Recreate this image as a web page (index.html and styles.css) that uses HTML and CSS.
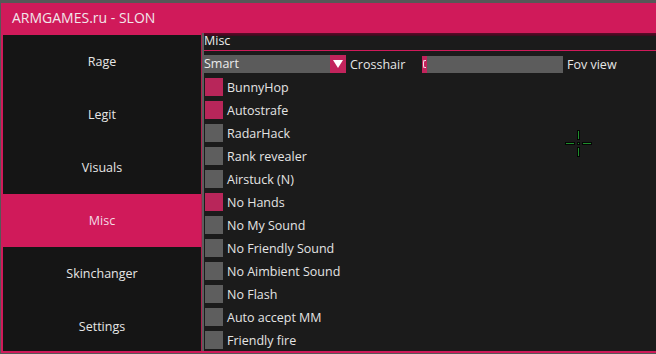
FILE: index.html
```html
<!DOCTYPE html>
<html>
<head>
<meta charset="utf-8">
<link rel="stylesheet" href="styles.css">
</head>
<body>
<div class="window">
  <div class="titlebar">ARMGAMES.ru - SLON</div>
  <div class="main">
    <nav class="sidebar">
      <div class="tab">Rage</div>
      <div class="tab">Legit</div>
      <div class="tab">Visuals</div>
      <div class="tab active">Misc</div>
      <div class="tab">Skinchanger</div>
      <div class="tab">Settings</div>
    </nav>
    <div class="strip"></div>
    <section class="content">
      <div class="section-title">Misc</div>
      <div class="controls">
        <div class="combo">
          <span class="combo-value">Smart</span>
          <span class="combo-arrow"><svg width="10" height="8" viewBox="0 0 10 8"><path d="M0 0H10L5 8Z" fill="#fff"/></svg></span>
        </div>
        <span class="label">Crosshair</span>
        <div class="input"><span class="caret"></span></div>
        <span class="label">Fov view</span>
      </div>
      <ul class="checks">
        <li><span class="box on"></span>BunnyHop</li>
        <li><span class="box on"></span>Autostrafe</li>
        <li><span class="box"></span>RadarHack</li>
        <li><span class="box"></span>Rank revealer</li>
        <li><span class="box"></span>Airstuck (N)</li>
        <li><span class="box on"></span>No Hands</li>
        <li><span class="box"></span>No My Sound</li>
        <li><span class="box"></span>No Friendly Sound</li>
        <li><span class="box"></span>No Aimbient Sound</li>
        <li><span class="box"></span>No Flash</li>
        <li><span class="box"></span>Auto accept MM</li>
        <li><span class="box"></span>Friendly fire</li>
      </ul>
      <svg class="crosshair" width="30" height="30" viewBox="0 0 30 30">
        <g fill="#1f8d2c" stroke="#050505" stroke-width="1">
          <rect x="1.5" y="13.5" width="9" height="2"/>
          <rect x="18.5" y="13.5" width="9" height="2"/>
          <rect x="13.5" y="1.5" width="2" height="9"/>
          <rect x="13.5" y="18.5" width="2" height="9"/>
          <rect x="13.5" y="13.5" width="2" height="2"/>
        </g>
      </svg>
    </section>
  </div>
</div>
</body>
</html>
```

FILE: styles.css
```css
html, body {
  margin: 0;
  padding: 0;
}
body {
  background: #575757;
  width: 656px;
  height: 354px;
  overflow: hidden;
  font-family: "Open Sans", "Noto Sans", sans-serif;
  font-size: 12.5px;
  color: #e4e4e4;
}
.window {
  margin: 3px 0 0 1px;
  width: 670px;
  height: 350px;
  background: #d01a5a;
  box-sizing: border-box;
  border-left: 2px solid #d01a5a;
  border-bottom: 2px solid #d01a5a;
  display: flex;
  flex-direction: column;
}
.titlebar {
  height: 30px;
  line-height: 30px;
  padding-left: 9px;
  font-size: 14px;
  color: #f2e6ea;
  flex: none;
}
.main {
  flex: 1;
  display: flex;
  min-height: 0;
}
.sidebar {
  width: 198px;
  margin-top: 2px;
  background: #151515;
  overflow: hidden;
  flex: none;
}
.tab {
  height: 53px;
  display: flex;
  align-items: center;
  justify-content: center;
  padding-bottom: 1px;
  box-sizing: border-box;
  color: #e6e6e6;
}
.tab.active {
  background: #d01a5a;
  color: #f4dbe4;
}
.strip {
  width: 3px;
  background: #5d5d5d;
  border-left: 1px solid #b0204f;
  box-sizing: border-box;
  flex: none;
}
.content {
  position: relative;
  flex: 1;
  background: linear-gradient(#5e0a28 0, #3a0a1c 3px, #1b1b1b 3px);
  padding-left: 1px;
}
.section-title {
  height: 17px;
  line-height: 16px;
  border-bottom: 1px solid #d01a5a;
  margin-left: -1px;
  color: #ececec;
}
.controls {
  margin-top: 4px;
  display: grid;
  grid-template-columns: 142px 76px 141px auto;
  align-items: center;
  height: 18px;
  margin-left: -1px;
}
.combo {
  display: flex;
  height: 18px;
}
.combo-value {
  flex: 1;
  background: #5b5b5b;
  line-height: 18px;
  color: #ececec;
}
.combo-arrow {
  width: 16px;
  background: #c2245c;
  display: flex;
  align-items: center;
  justify-content: center;
}
.label {
  margin-left: 4px;
  color: #e6e6e6;
}
.input {
  height: 17px;
  background: #5c5c5c;
  display: flex;
}
.caret {
  width: 5px;
  background: #c2245c;
  position: relative;
}
.caret::before {
  content: "";
  position: absolute;
  left: 1px;
  top: 4px;
  width: 3px;
  height: 8px;
  border: 1px solid #f0e0e6;
  border-right: none;
  border-radius: 2px 0 0 2px;
  box-sizing: border-box;
}
.checks {
  list-style: none;
  margin: 5px 0 0 0;
  padding: 0;
  display: flex;
  flex-direction: column;
  gap: 5px;
}
.checks li {
  display: flex;
  align-items: center;
  height: 18px;
  gap: 4px;
}
.box {
  width: 18px;
  height: 18px;
  background: #5e5e5e;
}
.box.on {
  background: #b8265a;
}
.crosshair {
  position: absolute;
  left: 360px;
  top: 96px;
}
```
